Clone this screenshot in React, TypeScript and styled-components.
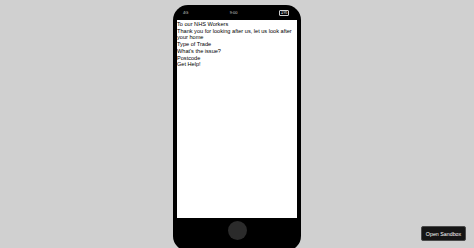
import styled, { createGlobalStyle } from 'styled-components';

const GlobalStyle = createGlobalStyle`
  html, body {
    margin: 0;
    padding: 0;
    background: #d0d0d0;
    overflow: hidden;
  }

  body {
    font-family: 'Liberation Sans', Arial, sans-serif;
  }
`;

const Page = styled.main`
  width: 474px;
  height: 248px;
  display: flex;
  justify-content: center;
  padding-top: 5px;
  box-sizing: border-box;
  overflow: hidden;
`;

const PhoneFrame = styled.div`
  width: 128px;
  height: 246px;
  background: #000;
  border-radius: 15px;
  display: flex;
  flex-direction: column;
  align-items: center;
  flex-shrink: 0;
`;

const StatusBar = styled.div`
  width: 120px;
  height: 15px;
  display: flex;
  align-items: center;
  justify-content: space-between;
  padding: 0 8px 0 6px;
  box-sizing: border-box;
  color: #cfcfcf;
  font-size: 4px;
`;

const Battery = styled.span`
  display: inline-flex;
  align-items: center;
  justify-content: center;
  width: 10px;
  height: 6px;
  border: 1px solid #cfcfcf;
  border-radius: 1px;
  box-sizing: border-box;
  color: #e0e0e0;
  font-size: 4.5px;
  line-height: 4px;
  overflow: visible;
`;

const Screen = styled.section`
  width: 120px;
  height: 198px;
  background: #fff;
  color: #000;
  font-size: 5.6px;
  line-height: 6.7px;
  padding-top: 1px;
  box-sizing: border-box;
  overflow: hidden;
`;

const Line = styled.p`
  margin: 0;
`;

const HomeButton = styled.div`
  width: 19px;
  height: 19px;
  margin-top: 3px;
  border-radius: 50%;
  background: #2b2b2b;
`;

const SandboxButton = styled.button`
  position: fixed;
  right: 8px;
  bottom: 7px;
  width: 45px;
  height: 15px;
  padding: 0;
  background: #151515;
  color: #fff;
  border: 0.6px solid #4a4a4a;
  border-radius: 2px;
  font-family: 'Liberation Sans', Arial, sans-serif;
  font-size: 5.3px;
`;

const lines = [
  'To our NHS Workers',
  'Thank you for looking after us, let us look after your home',
  'Type of Trade',
  "What's the issue?",
  'Postcode',
  'Get Help!',
];

export default function App() {
  return (
    <>
      <GlobalStyle />
      <Page>
        <PhoneFrame>
          <StatusBar>
            <span>4G</span>
            <span>9:00</span>
            <Battery>1%</Battery>
          </StatusBar>
          <Screen>
            {lines.map((line, index) => (
              <Line key={index}>{line}</Line>
            ))}
          </Screen>
          <HomeButton />
        </PhoneFrame>
      </Page>
      <SandboxButton>Open Sandbox</SandboxButton>
    </>
  );
}
